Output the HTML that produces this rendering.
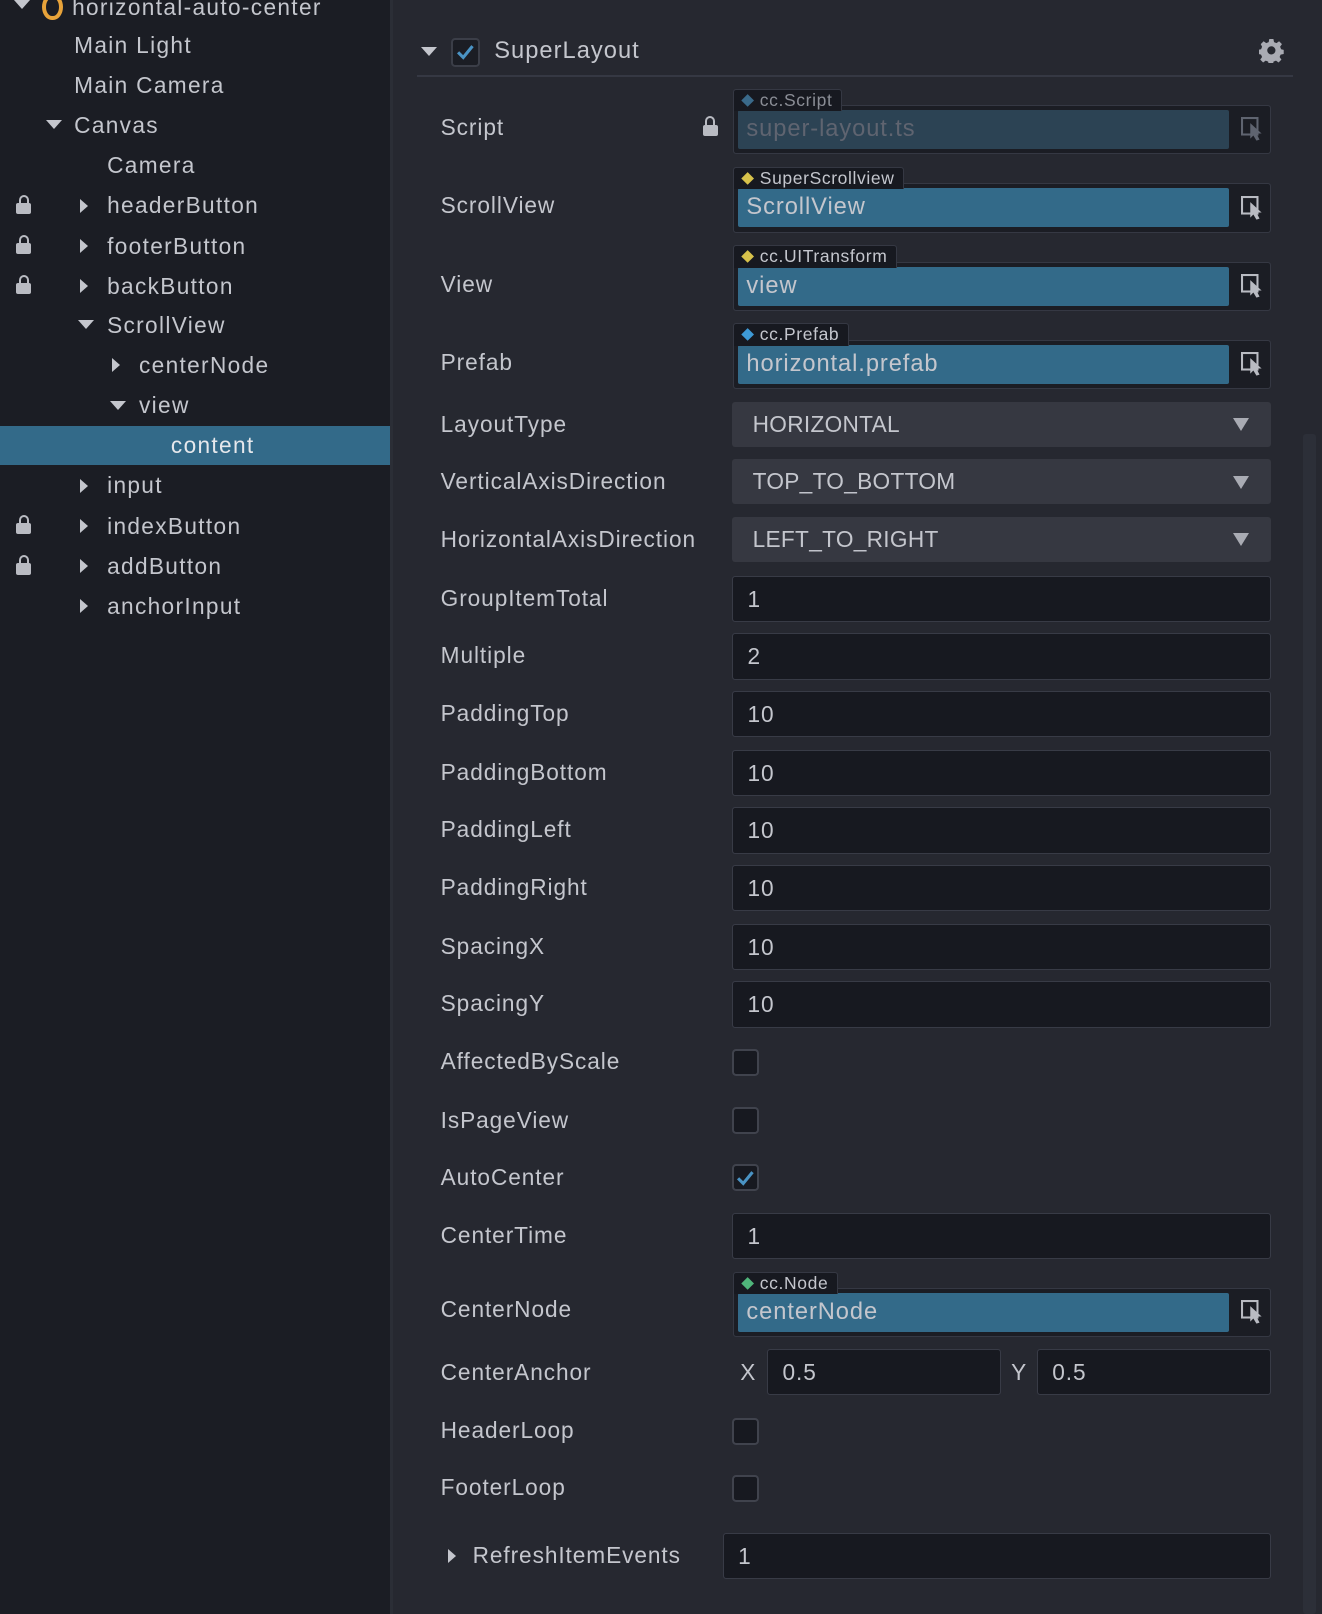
<!DOCTYPE html>
<html><head><meta charset="utf-8"><style>
html,body{margin:0;padding:0;background:#262830;overflow:hidden}
body{width:1284px;height:1568px;zoom:1.0296;position:relative;font-family:"Liberation Sans",sans-serif;color:#c4c6cd;font-size:22px;letter-spacing:0.9px}
.a{position:absolute}
.left{left:0;top:0;width:379px;height:1568px;background:#1b1d24;border-right:3px solid #2b2e36}
.t{position:absolute;line-height:38px;height:38px;white-space:nowrap;letter-spacing:1.3px}
.tri-d{position:absolute;width:0;height:0;border-left:8px solid transparent;border-right:8px solid transparent;border-top:9px solid #c4c6cd}
.tri-r{position:absolute;width:0;height:0;border-top:7px solid transparent;border-bottom:7px solid transparent;border-left:8px solid #c4c6cd}
.lock{position:absolute;width:14px;height:11px;background:#b9bbc2;border-radius:2px}
.lock:before{content:"";position:absolute;left:2px;top:-8px;width:6px;height:8px;border:2px solid #b9bbc2;border-bottom:none;border-radius:5px 5px 0 0}
.lbl{position:absolute;left:428px;line-height:30px;white-space:nowrap}
.inp{position:absolute;left:711px;width:523px;height:45px;background:#171920;border:1px solid #383b46;border-radius:3px;box-sizing:border-box;line-height:43px;padding-left:14px}
.dd{position:absolute;left:711px;width:523px;height:44px;background:#363841;border-radius:3px;line-height:44px;padding-left:20px;box-sizing:border-box;letter-spacing:0.3px}
.dd:after{content:"";position:absolute;right:21px;top:16px;border-left:8px solid transparent;border-right:8px solid transparent;border-top:13px solid #a9abb3}
.cb{position:absolute;left:711px;width:26px;height:26px;background:#171920;border:2px solid #40434d;border-radius:4px;box-sizing:border-box}
.tag{position:absolute;left:712px;height:22px;background:#171920;border:1px solid #353843;border-bottom:none;border-radius:3px 3px 0 0;font-size:17px;line-height:20px;padding:0 8px 0 25px;box-sizing:border-box;z-index:2;overflow:hidden;letter-spacing:0.6px}
.tag i{position:absolute;left:9px;top:6px;width:9px;height:9px;transform:rotate(45deg)}
.obj{position:absolute;left:712px;width:522px;height:48px;background:#1b1d24;border:1px solid #353843;border-radius:3px;box-sizing:border-box}
.obj .in{position:absolute;left:4px;top:4px;width:477px;height:38px;background:#336a89;border-radius:2px;line-height:38px;padding-left:8px;box-sizing:border-box;font-size:23px}
.obj svg{position:absolute;left:492px;top:11px}
</style></head><body>
<div class="a left"></div>
<div class="tri-d" style="left:14px;top:0px"></div>
<div class="a" style="left:41px;top:-6px;width:12px;height:18px;border:4px solid #e8a33a;border-radius:50%"></div>
<div class="t" style="left:70px;top:-12px">horizontal-auto-center</div>
<div class="t" style="left:72px;top:25px">Main Light</div>
<div class="t" style="left:72px;top:64px">Main Camera</div>
<div class="tri-d" style="left:45px;top:117px"></div>
<div class="t" style="left:72px;top:103px">Canvas</div>
<div class="t" style="left:104px;top:142px">Camera</div>
<div class="lock" style="left:16px;top:197px"></div><div class="tri-r" style="left:78px;top:193px"></div>
<div class="t" style="left:104px;top:181px">headerButton</div>
<div class="lock" style="left:16px;top:236px"></div><div class="tri-r" style="left:78px;top:232px"></div>
<div class="t" style="left:104px;top:220px">footerButton</div>
<div class="lock" style="left:16px;top:275px"></div><div class="tri-r" style="left:78px;top:271px"></div>
<div class="t" style="left:104px;top:259px">backButton</div>
<div class="tri-d" style="left:76px;top:311px"></div>
<div class="t" style="left:104px;top:297px">ScrollView</div>
<div class="tri-r" style="left:109px;top:348px"></div>
<div class="t" style="left:135px;top:336px">centerNode</div>
<div class="tri-d" style="left:107px;top:389px"></div>
<div class="t" style="left:135px;top:375px">view</div>
<div class="a" style="left:0;top:414px;width:379px;height:38px;background:#336a89"></div>
<div class="t" style="left:166px;top:414px;color:#e6e8ec">content</div>
<div class="tri-r" style="left:78px;top:465px"></div>
<div class="t" style="left:104px;top:453px">input</div>
<div class="lock" style="left:16px;top:508px"></div><div class="tri-r" style="left:78px;top:504px"></div>
<div class="t" style="left:104px;top:492px">indexButton</div>
<div class="lock" style="left:16px;top:547px"></div><div class="tri-r" style="left:78px;top:543px"></div>
<div class="t" style="left:104px;top:531px">addButton</div>
<div class="tri-r" style="left:78px;top:582px"></div>
<div class="t" style="left:104px;top:570px">anchorInput</div>

<div class="a" style="left:1266px;top:422px;width:12px;height:1146px;background:#2c2f38;border-radius:3px"></div>
<div class="tri-d" style="left:409px;top:46px"></div>
<div class="a" style="left:438px;top:37px;width:28px;height:28px;background:#1b1d24;border:2px solid #3b3e48;border-radius:4px;box-sizing:border-box"></div>
<svg class="a" style="left:442px;top:41px" width="20" height="20"><path d="M3 10 L8 15 L17 4" stroke="#4a93c4" stroke-width="3" fill="none"/></svg>
<div class="a" style="left:480px;top:35px;line-height:30px;font-size:23px;letter-spacing:1px">SuperLayout</div>
<svg class="a" style="left:1223px;top:37px" width="24" height="24" viewBox="0 0 24 24"><path fill="#a9abb3" fill-rule="evenodd" d="M10 1h4l.6 3 2.4 1 2.5-1.8 2.8 2.8L20.5 8.5l1 2.4 2.5.6v4l-3 .6-1 2.4 1.8 2.5-2.8 2.8-2.5-1.8-2.4 1-.6 3h-4l-.6-3-2.4-1-2.5 1.8-2.8-2.8 1.8-2.5-1-2.4-3-.6v-4l3-.6 1-2.4L1.7 6l2.8-2.8L7 5l2.4-1zM12 8a4 4 0 100 8 4 4 0 100-8z"/></svg>
<div class="a" style="left:405px;top:73px;width:851px;height:2px;background:#353843"></div>

<div class="lbl" style="top:109px">Script</div>
<div class="lock" style="left:683px;top:121px"></div>
<div class="tag" style="top:86px;color:#8a8d95"><i style="background:#3a6a8a"></i>cc.Script</div>
<div class="obj" style="top:102px"><div class="in" style="background:#2c4354;color:#5f6470">super-layout.ts</div><svg width="22" height="24"><rect x="1" y="1" width="15" height="16" fill="none" stroke="#5f6470" stroke-width="2"/><path d="M9 6 L20 16 L15 16 L18 22 L15 23 L12 18 L9 21Z" fill="#5f6470"/></svg></div>

<div class="lbl" style="top:185px">ScrollView</div>
<div class="tag" style="top:162px"><i style="background:#d7c24b"></i>SuperScrollview</div>
<div class="obj" style="top:178px"><div class="in">ScrollView</div><svg width="22" height="24"><rect x="1" y="1" width="15" height="16" fill="none" stroke="#b9bbc2" stroke-width="2"/><path d="M9 6 L20 16 L15 16 L18 22 L15 23 L12 18 L9 21Z" fill="#b9bbc2"/></svg></div>

<div class="lbl" style="top:261px">View</div>
<div class="tag" style="top:238px"><i style="background:#d7c24b"></i>cc.UITransform</div>
<div class="obj" style="top:254px"><div class="in">view</div><svg width="22" height="24"><rect x="1" y="1" width="15" height="16" fill="none" stroke="#b9bbc2" stroke-width="2"/><path d="M9 6 L20 16 L15 16 L18 22 L15 23 L12 18 L9 21Z" fill="#b9bbc2"/></svg></div>

<div class="lbl" style="top:337px">Prefab</div>
<div class="tag" style="top:314px"><i style="background:#3e9ad6"></i>cc.Prefab</div>
<div class="obj" style="top:330px"><div class="in">horizontal.prefab</div><svg width="22" height="24"><rect x="1" y="1" width="15" height="16" fill="none" stroke="#b9bbc2" stroke-width="2"/><path d="M9 6 L20 16 L15 16 L18 22 L15 23 L12 18 L9 21Z" fill="#b9bbc2"/></svg></div>

<div class="lbl" style="top:397px">LayoutType</div><div class="dd" style="top:390px">HORIZONTAL</div>
<div class="lbl" style="top:453px">VerticalAxisDirection</div><div class="dd" style="top:446px">TOP_TO_BOTTOM</div>
<div class="lbl" style="top:509px">HorizontalAxisDirection</div><div class="dd" style="top:502px">LEFT_TO_RIGHT</div>

<div class="lbl" style="top:566px">GroupItemTotal</div><div class="inp" style="top:559px">1</div>
<div class="lbl" style="top:622px">Multiple</div><div class="inp" style="top:615px">2</div>
<div class="lbl" style="top:678px">PaddingTop</div><div class="inp" style="top:671px">10</div>
<div class="lbl" style="top:735px">PaddingBottom</div><div class="inp" style="top:728px">10</div>
<div class="lbl" style="top:791px">PaddingLeft</div><div class="inp" style="top:784px">10</div>
<div class="lbl" style="top:847px">PaddingRight</div><div class="inp" style="top:840px">10</div>
<div class="lbl" style="top:904px">SpacingX</div><div class="inp" style="top:897px">10</div>
<div class="lbl" style="top:960px">SpacingY</div><div class="inp" style="top:953px">10</div>

<div class="lbl" style="top:1016px">AffectedByScale</div><div class="cb" style="top:1019px"></div>
<div class="lbl" style="top:1073px">IsPageView</div><div class="cb" style="top:1075px"></div>
<div class="lbl" style="top:1129px">AutoCenter</div><div class="cb" style="top:1131px"></div>
<svg class="a" style="left:714px;top:1134px" width="20" height="20"><path d="M3 10 L8 15 L17 4" stroke="#4a93c4" stroke-width="3" fill="none"/></svg>
<div class="lbl" style="top:1185px">CenterTime</div><div class="inp" style="top:1178px">1</div>

<div class="lbl" style="top:1257px">CenterNode</div>
<div class="tag" style="top:1235px"><i style="background:#4fb57a"></i>cc.Node</div>
<div class="obj" style="top:1251px"><div class="in">centerNode</div><svg width="22" height="24"><rect x="1" y="1" width="15" height="16" fill="none" stroke="#b9bbc2" stroke-width="2"/><path d="M9 6 L20 16 L15 16 L18 22 L15 23 L12 18 L9 21Z" fill="#b9bbc2"/></svg></div>

<div class="lbl" style="top:1318px">CenterAnchor</div>
<div class="a" style="left:719px;top:1318px;line-height:30px">X</div>
<div class="inp" style="top:1310px;left:745px;width:227px;height:45px">0.5</div>
<div class="a" style="left:982px;top:1318px;line-height:30px">Y</div>
<div class="inp" style="top:1310px;left:1007px;width:227px;height:45px">0.5</div>

<div class="lbl" style="top:1374px">HeaderLoop</div><div class="cb" style="top:1377px"></div>
<div class="lbl" style="top:1430px">FooterLoop</div><div class="cb" style="top:1433px"></div>

<div class="tri-r" style="left:435px;top:1504px"></div>
<div class="lbl" style="top:1496px;left:459px">RefreshItemEvents</div>
<div class="inp" style="top:1489px;left:702px;width:532px;height:45px">1</div>
</body></html>
